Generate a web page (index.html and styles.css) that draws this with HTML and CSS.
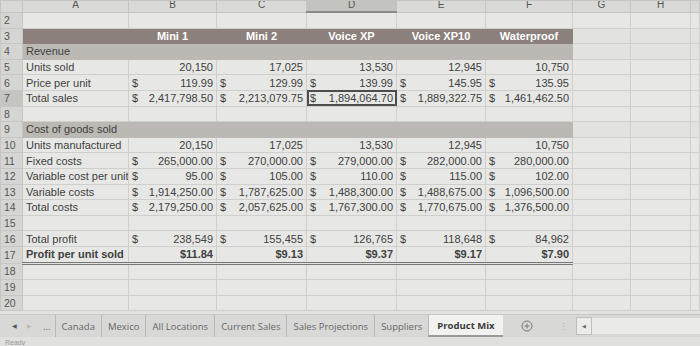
FILE: index.html
```html
<!DOCTYPE html>
<html lang="en">
<head>
    <meta charset="UTF-8">
    <title>Product Mix</title>
    <link rel="stylesheet" href="styles.css">
</head>
<body>
    <div class="sheet">
        <table class="grid">
            <colgroup>
                <col class="c-rn"><col class="c-a"><col class="c-b"><col class="c-c"><col class="c-d"><col class="c-e"><col class="c-f"><col class="c-g"><col class="c-h"><col>
            </colgroup>
            <tr class="colhead">
                <th></th><th>A</th><th>B</th><th>C</th><th class="sel">D</th><th>E</th><th>F</th><th>G</th><th>H</th><th></th>
            </tr>
            <tr><td class="rn">2</td><td></td><td></td><td></td><td></td><td></td><td></td><td></td><td></td><td></td></tr>
            <tr class="band-dark">
                <td class="rn">3</td><td></td><td>Mini 1</td><td>Mini 2</td><td>Voice XP</td><td>Voice XP10</td><td>Waterproof</td><td class="plain"></td><td class="plain"></td><td class="plain"></td>
            </tr>
            <tr class="band-light">
                <td class="rn">4</td><td>Revenue</td><td></td><td></td><td></td><td></td><td></td><td class="plain"></td><td class="plain"></td><td class="plain"></td>
            </tr>
            <tr>
                <td class="rn">5</td><td>Units sold</td><td class="num">20,150</td><td class="num">17,025</td><td class="num">13,530</td><td class="num">12,945</td><td class="num">10,750</td><td></td><td></td><td></td>
            </tr>
            <tr>
                <td class="rn">6</td><td>Price per unit</td>
                <td><div class="acc"><span>$</span><span>119.99</span></div></td>
                <td><div class="acc"><span>$</span><span>129.99</span></div></td>
                <td><div class="acc"><span>$</span><span>139.99</span></div></td>
                <td><div class="acc"><span>$</span><span>145.95</span></div></td>
                <td><div class="acc"><span>$</span><span>135.95</span></div></td>
                <td></td><td></td><td></td>
            </tr>
            <tr>
                <td class="rn rn-sel">7</td><td>Total sales</td>
                <td><div class="acc"><span>$</span><span>2,417,798.50</span></div></td>
                <td><div class="acc"><span>$</span><span>2,213,079.75</span></div></td>
                <td class="active"><div class="acc"><span>$</span><span>1,894,064.70</span></div></td>
                <td><div class="acc"><span>$</span><span>1,889,322.75</span></div></td>
                <td><div class="acc"><span>$</span><span>1,461,462.50</span></div></td>
                <td></td><td></td><td></td>
            </tr>
            <tr><td class="rn">8</td><td></td><td></td><td></td><td></td><td></td><td></td><td></td><td></td><td></td></tr>
            <tr class="band-light">
                <td class="rn">9</td><td>Cost of goods sold</td><td></td><td></td><td></td><td></td><td></td><td class="plain"></td><td class="plain"></td><td class="plain"></td>
            </tr>
            <tr>
                <td class="rn">10</td><td>Units manufactured</td><td class="num">20,150</td><td class="num">17,025</td><td class="num">13,530</td><td class="num">12,945</td><td class="num">10,750</td><td></td><td></td><td></td>
            </tr>
            <tr>
                <td class="rn">11</td><td>Fixed costs</td>
                <td><div class="acc"><span>$</span><span>265,000.00</span></div></td>
                <td><div class="acc"><span>$</span><span>270,000.00</span></div></td>
                <td><div class="acc"><span>$</span><span>279,000.00</span></div></td>
                <td><div class="acc"><span>$</span><span>282,000.00</span></div></td>
                <td><div class="acc"><span>$</span><span>280,000.00</span></div></td>
                <td></td><td></td><td></td>
            </tr>
            <tr>
                <td class="rn">12</td><td>Variable cost per unit</td>
                <td><div class="acc"><span>$</span><span>95.00</span></div></td>
                <td><div class="acc"><span>$</span><span>105.00</span></div></td>
                <td><div class="acc"><span>$</span><span>110.00</span></div></td>
                <td><div class="acc"><span>$</span><span>115.00</span></div></td>
                <td><div class="acc"><span>$</span><span>102.00</span></div></td>
                <td></td><td></td><td></td>
            </tr>
            <tr>
                <td class="rn">13</td><td>Variable costs</td>
                <td><div class="acc"><span>$</span><span>1,914,250.00</span></div></td>
                <td><div class="acc"><span>$</span><span>1,787,625.00</span></div></td>
                <td><div class="acc"><span>$</span><span>1,488,300.00</span></div></td>
                <td><div class="acc"><span>$</span><span>1,488,675.00</span></div></td>
                <td><div class="acc"><span>$</span><span>1,096,500.00</span></div></td>
                <td></td><td></td><td></td>
            </tr>
            <tr>
                <td class="rn">14</td><td>Total costs</td>
                <td><div class="acc"><span>$</span><span>2,179,250.00</span></div></td>
                <td><div class="acc"><span>$</span><span>2,057,625.00</span></div></td>
                <td><div class="acc"><span>$</span><span>1,767,300.00</span></div></td>
                <td><div class="acc"><span>$</span><span>1,770,675.00</span></div></td>
                <td><div class="acc"><span>$</span><span>1,376,500.00</span></div></td>
                <td></td><td></td><td></td>
            </tr>
            <tr><td class="rn">15</td><td></td><td></td><td></td><td></td><td></td><td></td><td></td><td></td><td></td></tr>
            <tr class="total-top">
                <td class="rn">16</td><td class="tt">Total profit</td>
                <td class="tt"><div class="acc"><span>$</span><span>238,549</span></div></td>
                <td class="tt"><div class="acc"><span>$</span><span>155,455</span></div></td>
                <td class="tt"><div class="acc"><span>$</span><span>126,765</span></div></td>
                <td class="tt"><div class="acc"><span>$</span><span>118,648</span></div></td>
                <td class="tt"><div class="acc"><span>$</span><span>84,962</span></div></td>
                <td></td><td></td><td></td>
            </tr>
            <tr class="total-bold">
                <td class="rn">17</td><td class="tb">Profit per unit sold</td><td class="num tb">$11.84</td><td class="num tb">$9.13</td><td class="num tb">$9.37</td><td class="num tb">$9.17</td><td class="num tb">$7.90</td><td></td><td></td><td></td>
            </tr>
            <tr><td class="rn">18</td><td></td><td></td><td></td><td></td><td></td><td></td><td></td><td></td><td></td></tr>
            <tr><td class="rn">19</td><td></td><td></td><td></td><td></td><td></td><td></td><td></td><td></td><td></td></tr>
            <tr><td class="rn">20</td><td></td><td></td><td></td><td></td><td></td><td></td><td></td><td></td><td></td></tr>
        </table>
    </div>

    <div class="tabbar">
        <span class="nav">&#9664;</span>
        <span class="nav dim">&#9654;</span>
        <span class="more">...</span>
        <span class="tab">Canada</span>
        <span class="tab">Mexico</span>
        <span class="tab">All Locations</span>
        <span class="tab">Current Sales</span>
        <span class="tab">Sales Projections</span>
        <span class="tab">Suppliers</span>
        <span class="tab active-tab">Product Mix</span>
        <span class="add">
            <svg width="12" height="12" viewBox="0 0 12 12"><circle cx="6" cy="6" r="5" fill="none" stroke="#777" stroke-width="1"/><path d="M6 3.5v5M3.5 6h5" stroke="#777" stroke-width="1"/></svg>
        </span>
        <span class="dots">&#8942;</span>
        <span class="scroll-left">&#9664;</span>
        <span class="scroll-track"></span>
    </div>
    <div class="status">Ready</div>
</body>
</html>
```

FILE: styles.css
```css
body {
    margin: 0;
    width: 700px;
    height: 346px;
    overflow: hidden;
    background-color: #e2e3e0;
    font-family: "Liberation Sans", Arial, sans-serif;
    color: #3a3a3a;
}

.grid {
    border-collapse: collapse;
    table-layout: fixed;
    width: 700px;
}

.c-rn { width: 22px; }
.c-a { width: 106px; }
.c-b { width: 88px; }
.c-c { width: 90px; }
.c-d { width: 90px; }
.c-e { width: 89px; }
.c-f { width: 87px; }
.c-g { width: 58px; }
.c-h { width: 60px; }

.colhead th {
    height: 10px;
    padding: 0;
    font-size: 10px;
    font-weight: normal;
    line-height: 8px;
    color: #555;
    background-color: #d9dad7;
    border: 1px solid #c4c5c1;
    vertical-align: top;
    overflow: hidden;
}

.colhead th.sel {
    background-color: #c3c3c0;
    border-bottom: 2px solid #8a8a88;
}

td {
    height: 14.6px;
    padding: 0 3px;
    font-size: 11px;
    line-height: 14px;
    border: 1px solid #cfd0cc;
    white-space: nowrap;
    overflow: hidden;
    background-color: #e7e8e5;
    color: #404040;
}

td.rn {
    padding: 0 0 0 3px;
    font-size: 10.5px;
    color: #555;
    background-color: #d5d6d3;
    border-color: #c6c7c3;
}

td.rn-sel {
    background-color: #c4c4c1;
}

.num {
    text-align: right;
}

.acc {
    display: flex;
    justify-content: space-between;
}

.band-dark td {
    background-color: #8b807c;
    border-color: #8b807c;
    color: #fff;
    font-weight: bold;
    text-align: center;
}

.band-light td {
    background-color: #bcb9b5;
    border-color: #bcb9b5;
}

.band-dark td.rn,
.band-light td.rn {
    background-color: #d5d6d3;
    border-color: #c6c7c3;
    color: #555;
    font-weight: normal;
    text-align: left;
}

.band-dark td.plain,
.band-light td.plain {
    background-color: #e2e3e0;
    border-color: #cfd0cc;
}

td.active {
    position: relative;
    outline: 2px solid #4d4d4d;
    outline-offset: -2px;
}

td.active::after {
    content: "";
    position: absolute;
    right: -2px;
    bottom: -2px;
    width: 4px;
    height: 4px;
    background-color: #3f6b4a;
}

td.tt {
    border-top: 1px solid #8f8f8c;
}

td.tb {
    font-weight: bold;
    border-bottom: 3px double #777;
}

.tabbar {
    display: flex;
    align-items: stretch;
    height: 22px;
    margin-top: 3px;
    background-color: #d8d9d6;
    border-top: 1px solid #c8c9c5;
    font-family: "Open Sans", "Liberation Sans", sans-serif;
    font-size: 9.5px;
    color: #666;
}

.nav {
    display: flex;
    align-items: center;
    padding-left: 12px;
    font-size: 6px;
    color: #555;
}

.nav.dim {
    color: #bbb;
    padding-left: 10px;
}

.more {
    display: flex;
    align-items: center;
    padding: 0 4px 0 11px;
    color: #666;
}

.tab {
    display: flex;
    align-items: center;
    padding: 0 6px;
    border-left: 1px solid #b9bab6;
    white-space: nowrap;
}

.tab.active-tab {
    background-color: #f2f2f0;
    color: #3a3a3a;
    font-weight: bold;
    border-bottom: 2px solid #9a9a98;
    padding: 0 8px;
}

.add {
    display: flex;
    align-items: center;
    padding: 0 0 0 18px;
}

.dots {
    display: flex;
    align-items: center;
    padding-left: 26px;
    color: #aaa;
    font-size: 9px;
}

.scroll-left {
    display: flex;
    align-items: center;
    margin: 2px 0 2px 8px;
    padding: 0 5px;
    font-size: 5px;
    color: #666;
    background-color: #ececea;
    border: 1px solid #bdbdbb;
}

.scroll-track {
    flex: 1;
    margin: 3px 0;
    background-color: #eaeae8;
}

.status {
    height: 12px;
    padding-left: 5px;
    font-size: 7px;
    line-height: 11px;
    color: #999;
    background-color: #e0e1de;
}
```
